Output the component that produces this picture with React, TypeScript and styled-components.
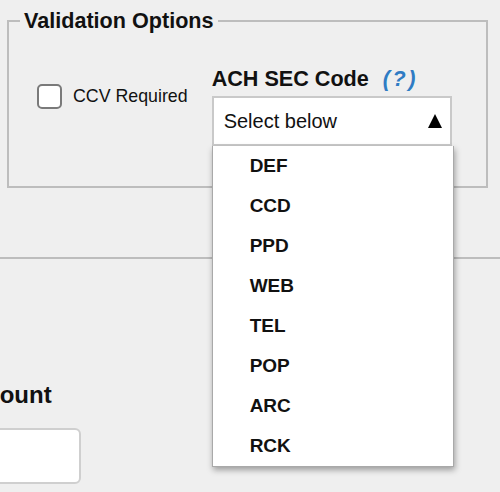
import { createGlobalStyle } from 'styled-components'
import styled from 'styled-components'

const SEC_CODES = ['DEF', 'CCD', 'PPD', 'WEB', 'TEL', 'POP', 'ARC', 'RCK']

export default function App() {
  return (
    <>
      <GlobalStyle />
      <Page>
        <OptionsFieldset>
          <Legend>Validation Options</Legend>
          <OptionsRow>
            <CheckLabel>
              <CheckBox />
              CCV Required
            </CheckLabel>
            <SecColumn>
              <SecLabel>
                ACH SEC Code <Help>(?)</Help>
              </SecLabel>
              <SelectWrap>
                <SelectBox>
                  Select below
                  <Caret />
                </SelectBox>
                <Menu>
                  {SEC_CODES.map((code) => (
                    <MenuItem key={code}>{code}</MenuItem>
                  ))}
                </Menu>
              </SelectWrap>
            </SecColumn>
          </OptionsRow>
        </OptionsFieldset>

        <Divider />

        <AmountSection>
          <AmountLabel>Amount</AmountLabel>
          <AmountInput />
        </AmountSection>
      </Page>
    </>
  )
}

const GlobalStyle = createGlobalStyle`
  html, body {
    margin: 0;
    padding: 0;
    background: #efefef;
    overflow: hidden;
  }
  body {
    font-family: "Liberation Sans", Arial, sans-serif;
    color: #111;
  }
`

// ページ全体
const Page = styled.div`
  width: 500px;
  height: 492px;
  padding-top: 9px;
  box-sizing: border-box;
  overflow: hidden;
`

// 検証オプションの枠
const OptionsFieldset = styled.fieldset`
  margin: 0 0 0 7px;
  width: 481px;
  box-sizing: border-box;
  border: 2px solid #bdbdbd;
  padding: 33px 0 40px 11px;
`

const Legend = styled.legend`
  padding: 0 4px;
  font-size: 21.6px;
  line-height: 24px;
  font-weight: 700;
`

const OptionsRow = styled.div`
  display: flex;
  align-items: flex-start;
`

const CheckLabel = styled.label`
  display: flex;
  align-items: center;
  gap: 11px;
  margin: 18px 0 0 17px;
  font-size: 17.8px;
  line-height: 25px;
`

const CheckBox = styled.span`
  width: 25px;
  height: 25px;
  box-sizing: border-box;
  border: 2px solid #7a7a7a;
  border-radius: 5px;
  background: #fff;
`

const SecColumn = styled.div`
  display: flex;
  flex-direction: column;
  gap: 5px;
  margin-left: 24px;
`

const SecLabel = styled.div`
  font-size: 21.6px;
  line-height: 25px;
  font-weight: 700;
  white-space: nowrap;
`

const Help = styled.span`
  margin-left: 8px;
  color: #2f7cc4;
  font-style: italic;
  letter-spacing: 2.5px;
`

const SelectWrap = styled.div`
  position: relative;
`

const SelectBox = styled.div`
  width: 240px;
  height: 50px;
  box-sizing: border-box;
  display: flex;
  align-items: center;
  justify-content: space-between;
  padding: 0 8px 0 10px;
  background: #fff;
  border: 2px solid #c9c9c9;
  font-size: 20px;
`

// 上向き三角
const Caret = styled.span`
  width: 0;
  height: 0;
  border-left: 7px solid transparent;
  border-right: 7px solid transparent;
  border-bottom: 14px solid #000;
`

// ドロップダウンメニュー
const Menu = styled.ul`
  position: absolute;
  top: 100%;
  left: 0;
  width: 242px;
  margin: 0;
  padding: 0;
  list-style: none;
  box-sizing: border-box;
  background: #fff;
  border: 1px solid #a9a9a9;
  border-top: none;
  box-shadow: 1px 3px 6px rgba(0, 0, 0, 0.35);
  z-index: 10;
`

const MenuItem = styled.li`
  height: 40px;
  display: flex;
  align-items: center;
  padding-left: 37px;
  font-size: 19px;
  font-weight: 700;
`

const Divider = styled.hr`
  margin: 69px 0 0;
  border: none;
  border-top: 2px solid #bdbdbd;
`

const AmountSection = styled.div`
  display: flex;
  flex-direction: column;
  align-items: flex-start;
  gap: 19px;
  margin-top: 122px;
`

const AmountLabel = styled.div`
  margin-left: -39px;
  font-size: 24px;
  line-height: 28px;
  font-weight: 700;
`

const AmountInput = styled.div`
  width: 150px;
  height: 56px;
  margin-left: -69px;
  box-sizing: border-box;
  background: #fff;
  border: 2px solid #cfcfcf;
  border-radius: 6px;
`
